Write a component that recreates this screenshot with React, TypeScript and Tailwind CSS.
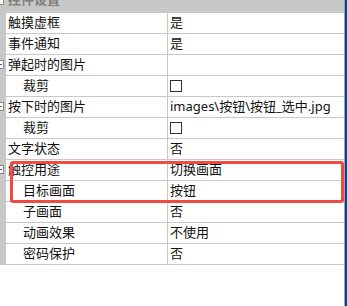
import React from 'react';

type Row = {
  label: string;
  value?: string;
  checkbox?: boolean;
  indent?: boolean;
  expander?: boolean;
};

const rows: Row[] = [
  { label: '触摸虚框', value: '是' },
  { label: '事件通知', value: '是' },
  { label: '弹起时的图片', expander: true },
  { label: '裁剪', checkbox: true, indent: true },
  { label: '按下时的图片', value: 'images\\按钮\\按钮_选中.jpg', expander: true },
  { label: '裁剪', checkbox: true, indent: true },
  { label: '文字状态', value: '否' },
  { label: '触控用途', value: '切换画面', expander: true },
  { label: '目标画面', value: '按钮', indent: true },
  { label: '子画面', value: '否', indent: true },
  { label: '动画效果', value: '不使用', indent: true },
  { label: '密码保护', value: '否', indent: true },
];

const Expander = () => (
  <span className="absolute left-[-5px] top-[5px] w-[9px] h-[9px] border border-[#8a8a8a] bg-white flex items-center justify-center">
    <span className="w-[5px] h-px bg-[#555]" />
  </span>
);

const PropertyRow = ({ row }: { row: Row }) => (
  <div className="flex h-[21px] border-b border-[#c8c8c8]">
    <div className="relative w-[6px] bg-[#c8c8c8] shrink-0">{row.expander && <Expander />}</div>
    <div
      className={`w-[162px] shrink-0 border-r border-[#c8c8c8] leading-[19px] whitespace-nowrap overflow-hidden ${
        row.indent ? 'pl-[17px]' : 'pl-[2px]'
      }`}
    >
      {row.label}
    </div>
    <div className="flex-1 pl-[2px] leading-[19px] whitespace-nowrap overflow-hidden">
      {row.checkbox ? (
        <span className="inline-block mt-[4px] w-[12px] h-[12px] border border-[#333] bg-white" />
      ) : (
        row.value
      )}
    </div>
  </div>
);

export default function App() {
  return (
    <div
      className="relative w-[347px] h-[306px] bg-white text-[13px] text-[#111] overflow-hidden"
      style={{ fontFamily: '"Noto Sans", "Noto Sans CJK SC", sans-serif' }}
    >
      <div className="flex h-full">
        <div className="w-[344px] flex flex-col">
          {/* category header, scrolled partly out of view */}
          <div className="relative h-[13px] bg-[#c8c8c8]">
            <span className="absolute left-[-5px] top-[-4px] w-[9px] h-[9px] border border-[#8a8a8a] bg-white" />
            <span className="absolute left-[8px] top-[-9px] leading-[17px] font-bold text-[#7d7d7d]">
              控件设置
            </span>
          </div>
          {rows.map((row, i) => (
            <PropertyRow key={i} row={row} />
          ))}
        </div>
        <div className="w-px bg-[#a0a0a0]" />
        <div className="w-[2px] bg-[#1c3c8c]" />
      </div>

      {/* red highlight annotation */}
      <div className="absolute left-[10px] top-[161px] w-[334px] h-[42px] border-[3px] border-[#ef4b43] rounded-[3px] pointer-events-none" />
    </div>
  );
}
